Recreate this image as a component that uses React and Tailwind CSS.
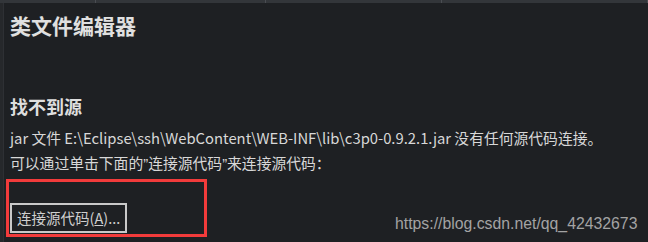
import React from 'react';

const cjk = { fontFamily: '"Noto Sans CJK SC", "Noto Sans", sans-serif' };
const narrow = { fontFamily: '"Liberation Sans", Arial, sans-serif' };

const App = () => {
  return (
    <div className="relative w-[648px] h-[242px] overflow-hidden bg-[#1e2023] text-[#dcdcdc]" style={cjk}>
      {/* top tab strip */}
      <div className="h-[3px] bg-[#33363a] flex">
        <div className="w-[96px] border-r border-[#4a4d52]" />
        <div className="w-[170px] border-r border-[#4a4d52]" />
        <div className="w-[176px] border-r border-[#4a4d52]" />
        <div className="flex-1 border-r border-[#4a4d52]" />
      </div>

      <div className="flex h-[239px]">
        <div className="w-[4px] bg-[#26282b] border-r border-[#2e3034]" />

        <div className="flex-1 pl-[6px]">
          <h1 className="mt-[9px] text-[21px] leading-[26px] font-bold text-[#e0e0e0]">类文件编辑器</h1>

          <h2 className="mt-[56px] text-[18px] leading-[24px] font-bold text-[#dedede]">找不到源</h2>

          <p className="mt-[7px] text-[14.8px] leading-[25px] text-[#d8d8d8]">
            jar 文件 E:\Eclipse\ssh\WebContent\WEB-INF\lib\c3p0-0.9.2.1.jar 没有任何源代码连接。
          </p>
          <p className="text-[14.8px] leading-[25px] text-[#d8d8d8]">
            可以通过单击下面的<span style={narrow}>”</span>连接源代码<span style={narrow}>”</span>来连接源代码：
          </p>

          {/* annotation box around the button */}
          <div className="mt-[2px] ml-[-4px] w-[201px] h-[58px] border-[3px] border-[#f23b3b] pl-[1px] pt-[21px]">
            <button className="h-[30px] px-[5px] border-2 border-[#c9c9c9] bg-[#1e2023] text-[14.5px] leading-[24px] text-[#cfcfcf]">
              连接源代码(<span className="underline">A</span>)...
            </button>
          </div>
        </div>
      </div>

      <span
        className="absolute left-[395px] top-[213px] text-[15.8px] leading-[22px] text-[#a3a3a3]"
        style={narrow}
      >
        https://blog.csdn.net/qq_42432673
      </span>
    </div>
  );
};

export default App;
